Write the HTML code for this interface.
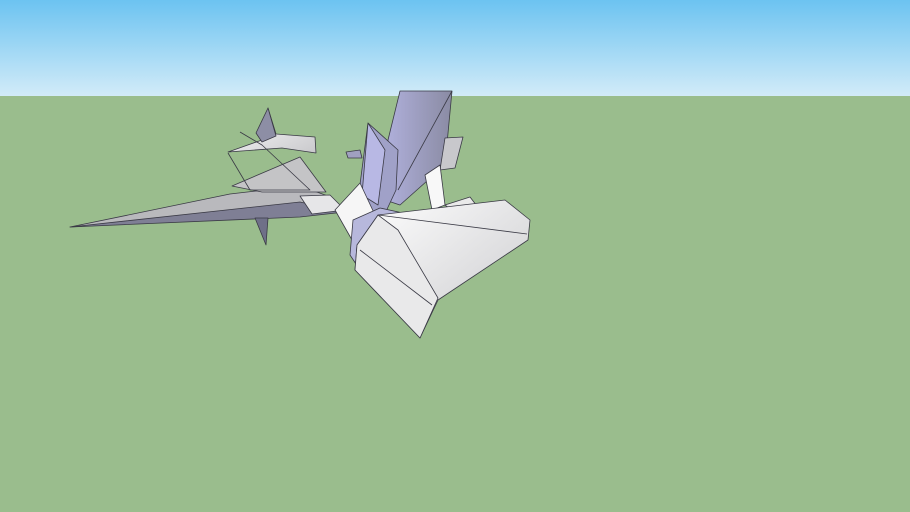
<!DOCTYPE html>
<html><head><style>
html,body{margin:0;padding:0;width:910px;height:512px;overflow:hidden}
.sky{position:absolute;left:0;top:0;width:910px;height:96px;background:linear-gradient(#6cc3f1,#d2ebf8)}
.g{position:absolute;left:0;top:96px;width:910px;height:416px;background:#9abd8d}
svg{position:absolute;left:0;top:0}
</style></head><body>
<div class="sky"></div><div class="g"></div>
<svg width="910" height="512" viewBox="0 0 910 512">
<defs>
<linearGradient id="w" x1="0" y1="0" x2="1" y2="1"><stop offset="0" stop-color="#ffffff"/><stop offset="1" stop-color="#c9c9cc"/></linearGradient>
<linearGradient id="v" x1="0" y1="0" x2="1" y2="0"><stop offset="0" stop-color="#b0b0dc"/><stop offset="1" stop-color="#8a8ba3"/></linearGradient>
</defs>
<g stroke="#3a3a45" stroke-width="0.8" stroke-linejoin="round">
<polygon points="70,227 230,194 300,186 328,196 345,212 300,214" fill="#b9b9bd"/>
<polygon points="70,227 300,202 345,212 300,217" fill="#7f7f95"/>
<polygon points="255,218 268,218 266,245" fill="#6f7088"/>
<polygon points="300,196 330,195 345,210 312,214" fill="#e6e6e8"/>
<polygon points="232,186 300,157 326,192 262,192" fill="#c4c4c6"/>
<polygon points="262,140 268,108 276,134 315,137 316,153 282,148 228,152" fill="url(#w)"/>
<polygon points="256,133 268,108 276,136 262,142" fill="#8d8ea5"/>
<polyline points="240,132 262,145 310,190 250,190 228,153" fill="none"/>
<polygon points="346,152 360,150 362,158 348,158" fill="#a0a0c0"/>
<polygon points="400,91 452,91 445,165 400,205 385,200 388,140" fill="url(#v)"/>
<polyline points="452,91 398,190" fill="none"/>
<polygon points="445,138 463,137 455,168 440,170" fill="#c8c8cc"/>
<polygon points="368,123 398,150 396,190 382,220 358,200" fill="#a0a1c8"/>
<polygon points="368,123 385,150 378,205 362,195" fill="#b8b8e4"/>
<polygon points="335,210 360,183 375,215 370,245 352,240" fill="#f6f6f6"/>
<polygon points="425,175 440,165 445,205 432,210" fill="#f8f8f8"/>
<polygon points="445,205 470,197 480,210 458,215" fill="#eaeaea"/>
<polygon points="353,220 380,208 412,215 418,240 360,270 350,255" fill="#b7b8dc"/>
<polygon points="378,215 505,200 530,220 528,240 438,300 420,338 355,270 357,245" fill="url(#w)"/>
<polygon points="378,215 398,230 438,298 420,338 355,270 357,245" fill="#e9e9ea"/>
<polyline points="378,215 527,234" fill="none"/>
<polyline points="360,250 432,305" fill="none"/>
</g>
</svg>
</body></html>
